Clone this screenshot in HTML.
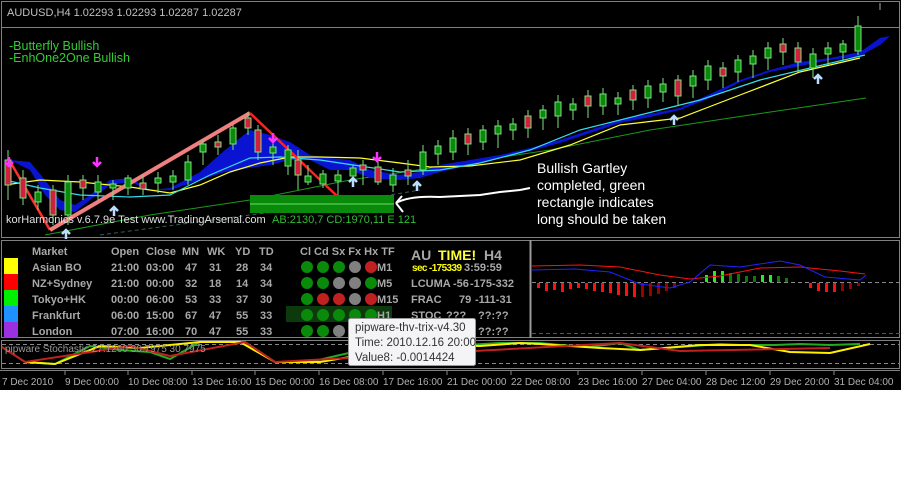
<!DOCTYPE html>
<html><head><meta charset="utf-8"><style>
body{margin:0;width:901px;height:480px;background:#fff;overflow:hidden;font-family:"Liberation Sans",sans-serif}
svg{display:block}
</style></head><body>
<svg width="901" height="480" xmlns="http://www.w3.org/2000/svg" font-family="Liberation Sans, sans-serif">
<defs>
<g id="dn"><path d="M0,-9 V0 M-4,-4 L0,0 L4,-4" stroke="#ff33ff" stroke-width="2.5" fill="none"/></g>
<g id="up"><path d="M0,9 V0 M-4,4 L0,0 L4,4" stroke="#bbddff" stroke-width="2.5" fill="none"/></g>
</defs>
<rect x="0" y="0" width="901" height="390" fill="#000"/>
<g fill="none" stroke="#808080" stroke-width="1">
<rect x="1.5" y="1.5" width="898" height="236"/>
<line x1="1" y1="27.5" x2="900" y2="27.5"/>
<rect x="1.5" y="240.5" width="898" height="97"/>
<line x1="530.5" y1="240" x2="530.5" y2="338" stroke="#999" stroke-width="2"/>
<rect x="1.5" y="340.5" width="898" height="28"/>
<line x1="0" y1="370.5" x2="900" y2="370.5"/>
</g>
<line x1="880" y1="3" x2="880" y2="10" stroke="#aaa"/>
<text x="7" y="16" fill="#c0c0c0" font-size="11">AUDUSD,H4  1.02293 1.02293 1.02287 1.02287</text>
<text x="9" y="50" fill="#33cc33" font-size="12.5">-Butterfly Bullish</text>
<text x="9" y="62" fill="#33cc33" font-size="12.5">-EnhOne2One Bullish</text>
<polyline fill="none" stroke="#1a9a1a" stroke-width="1" points="45,235 150,215 250,200 350,180 450,165 550,150 650,130 750,115 866,98"/>
<polyline fill="none" stroke="#3a5a5a" stroke-width="1" stroke-dasharray="4,3" points="100,235 250,215 330,205 420,190"/>
<path d="M10,160 L30,162 L45,180 L60,200 L75,205 L90,195 L110,180 L130,178 L150,190 L170,188 L200,172 L225,150 L250,130 L270,135 L290,142 L310,155 L330,158 L350,160 L370,170 L400,175 L420,172 L440,165 L470,160 L500,155 L530,148 L560,140 L590,130 L620,120 L650,114 L680,108 L710,94 L740,80 L770,70 L800,62 L830,58 L860,52 L880,38 L890,36 L880,45 L860,56 L830,60 L800,66 L770,72 L740,82 L710,98 L680,110 L650,117 L620,123 L590,133 L560,143 L530,151 L500,158 L470,165 L440,172 L420,178 L400,180 L370,178 L350,170 L330,170 L310,160 L290,160 L270,165 L250,168 L225,172 L200,180 L170,190 L150,190 L130,182 L110,185 L90,200 L75,212 L60,210 L45,195 L30,170 Z" fill="#0a14d0"/>
<polyline fill="none" stroke="#ffff33" stroke-width="1.2" points="5,185 40,180 80,182 130,187 170,193 200,185 230,172 260,163 290,157 320,157 360,158 400,163 430,167 470,166 520,160 570,145 620,125 680,118 740,95 800,72 860,58"/>
<polyline fill="none" stroke="#33ddee" stroke-width="1.2" points="5,180 40,188 80,195 130,197 170,195 210,175 250,158 280,157 320,160 360,166 400,172 440,170 480,163 530,150 580,130 640,115 700,100 760,80 810,68 865,55"/>
<polyline fill="none" stroke="#ff3030" stroke-width="2.5" points="8,158 50,230"/>
<polyline fill="none" stroke="#f08080" stroke-width="4" points="50,230 250,113"/>
<polyline fill="none" stroke="#ff2020" stroke-width="2.5" points="250,113 338,197"/>
<rect x="250" y="195" width="144" height="18" fill="#0a8a0a"/>
<line x1="250" y1="204" x2="394" y2="204" stroke="#66dd66"/>
<path d="M396,203 C405,198 420,196 440,197 L480,195 L500,192 L520,190 L530,188" fill="none" stroke="#fff" stroke-width="2"/>
<path d="M396,203 L402,196 M396,203 L403,212" stroke="#fff" stroke-width="2"/>
<g stroke="#7fe07f" stroke-width="1">
<line x1="8" y1="150" x2="8" y2="200"/><rect x="5" y="160" width="6" height="25" fill="#d02040"/>
<line x1="23" y1="170" x2="23" y2="205"/><rect x="20" y="178" width="6" height="20" fill="#d02040"/>
<line x1="38" y1="185" x2="38" y2="210"/><rect x="35" y="192" width="6" height="10" fill="#0a8a0a"/>
<line x1="53" y1="185" x2="53" y2="225"/><rect x="50" y="190" width="6" height="25" fill="#d02040"/>
<line x1="68" y1="175" x2="68" y2="225"/><rect x="65" y="182" width="6" height="33" fill="#0a8a0a"/>
<line x1="83" y1="175" x2="83" y2="200"/><rect x="80" y="180" width="6" height="8" fill="#d02040"/>
<line x1="98" y1="175" x2="98" y2="200"/><rect x="95" y="182" width="6" height="10" fill="#0a8a0a"/>
<line x1="113" y1="180" x2="113" y2="200"/><rect x="110" y="184" width="6" height="4" fill="#0a8a0a"/>
<line x1="128" y1="175" x2="128" y2="195"/><rect x="125" y="178" width="6" height="10" fill="#0a8a0a"/>
<line x1="143" y1="175" x2="143" y2="195"/><rect x="140" y="183" width="6" height="6" fill="#d02040"/>
<line x1="158" y1="172" x2="158" y2="193"/><rect x="155" y="178" width="6" height="5" fill="#0a8a0a"/>
<line x1="173" y1="170" x2="173" y2="190"/><rect x="170" y="176" width="6" height="6" fill="#0a8a0a"/>
<line x1="188" y1="155" x2="188" y2="185"/><rect x="185" y="162" width="6" height="18" fill="#0a8a0a"/>
<line x1="203" y1="140" x2="203" y2="165"/><rect x="200" y="144" width="6" height="8" fill="#0a8a0a"/>
<line x1="218" y1="135" x2="218" y2="155"/><rect x="215" y="142" width="6" height="5" fill="#d02040"/>
<line x1="233" y1="125" x2="233" y2="150"/><rect x="230" y="128" width="6" height="16" fill="#0a8a0a"/>
<line x1="248" y1="112" x2="248" y2="135"/><rect x="245" y="118" width="6" height="10" fill="#d02040"/>
<line x1="258" y1="125" x2="258" y2="160"/><rect x="255" y="130" width="6" height="22" fill="#d02040"/>
<line x1="273" y1="140" x2="273" y2="165"/><rect x="270" y="147" width="6" height="6" fill="#0a8a0a"/>
<line x1="288" y1="145" x2="288" y2="175"/><rect x="285" y="150" width="6" height="16" fill="#0a8a0a"/>
<line x1="298" y1="150" x2="298" y2="190"/><rect x="295" y="160" width="6" height="15" fill="#d02040"/>
<line x1="308" y1="165" x2="308" y2="185"/><rect x="305" y="176" width="6" height="6" fill="#0a8a0a"/>
<line x1="323" y1="170" x2="323" y2="188"/><rect x="320" y="174" width="6" height="10" fill="#0a8a0a"/>
<line x1="338" y1="170" x2="338" y2="195"/><rect x="335" y="175" width="6" height="6" fill="#0a8a0a"/>
<line x1="353" y1="165" x2="353" y2="185"/><rect x="350" y="168" width="6" height="8" fill="#0a8a0a"/>
<line x1="363" y1="160" x2="363" y2="185"/><rect x="360" y="165" width="6" height="5" fill="#d02040"/>
<line x1="378" y1="160" x2="378" y2="185"/><rect x="375" y="167" width="6" height="15" fill="#d02040"/>
<line x1="393" y1="168" x2="393" y2="192"/><rect x="390" y="175" width="6" height="10" fill="#0a8a0a"/>
<line x1="408" y1="160" x2="408" y2="185"/><rect x="405" y="170" width="6" height="6" fill="#d02040"/>
<line x1="423" y1="145" x2="423" y2="175"/><rect x="420" y="152" width="6" height="18" fill="#0a8a0a"/>
<line x1="438" y1="140" x2="438" y2="165"/><rect x="435" y="146" width="6" height="8" fill="#0a8a0a"/>
<line x1="453" y1="130" x2="453" y2="160"/><rect x="450" y="138" width="6" height="14" fill="#0a8a0a"/>
<line x1="468" y1="128" x2="468" y2="155"/><rect x="465" y="134" width="6" height="10" fill="#d02040"/>
<line x1="483" y1="125" x2="483" y2="150"/><rect x="480" y="130" width="6" height="12" fill="#0a8a0a"/>
<line x1="498" y1="120" x2="498" y2="148"/><rect x="495" y="126" width="6" height="8" fill="#0a8a0a"/>
<line x1="513" y1="118" x2="513" y2="140"/><rect x="510" y="124" width="6" height="6" fill="#0a8a0a"/>
<line x1="528" y1="110" x2="528" y2="138"/><rect x="525" y="116" width="6" height="12" fill="#d02040"/>
<line x1="543" y1="105" x2="543" y2="130"/><rect x="540" y="110" width="6" height="8" fill="#0a8a0a"/>
<line x1="558" y1="95" x2="558" y2="128"/><rect x="555" y="102" width="6" height="14" fill="#0a8a0a"/>
<line x1="573" y1="98" x2="573" y2="120"/><rect x="570" y="104" width="6" height="6" fill="#0a8a0a"/>
<line x1="588" y1="90" x2="588" y2="118"/><rect x="585" y="96" width="6" height="10" fill="#d02040"/>
<line x1="603" y1="88" x2="603" y2="115"/><rect x="600" y="94" width="6" height="12" fill="#0a8a0a"/>
<line x1="618" y1="92" x2="618" y2="115"/><rect x="615" y="98" width="6" height="6" fill="#0a8a0a"/>
<line x1="633" y1="85" x2="633" y2="110"/><rect x="630" y="90" width="6" height="10" fill="#d02040"/>
<line x1="648" y1="80" x2="648" y2="108"/><rect x="645" y="86" width="6" height="12" fill="#0a8a0a"/>
<line x1="663" y1="78" x2="663" y2="102"/><rect x="660" y="84" width="6" height="8" fill="#0a8a0a"/>
<line x1="678" y1="75" x2="678" y2="105"/><rect x="675" y="80" width="6" height="16" fill="#d02040"/>
<line x1="693" y1="70" x2="693" y2="98"/><rect x="690" y="76" width="6" height="10" fill="#0a8a0a"/>
<line x1="708" y1="60" x2="708" y2="90"/><rect x="705" y="66" width="6" height="14" fill="#0a8a0a"/>
<line x1="723" y1="62" x2="723" y2="88"/><rect x="720" y="68" width="6" height="8" fill="#d02040"/>
<line x1="738" y1="55" x2="738" y2="82"/><rect x="735" y="60" width="6" height="12" fill="#0a8a0a"/>
<line x1="753" y1="50" x2="753" y2="78"/><rect x="750" y="56" width="6" height="8" fill="#0a8a0a"/>
<line x1="768" y1="42" x2="768" y2="70"/><rect x="765" y="48" width="6" height="10" fill="#0a8a0a"/>
<line x1="783" y1="38" x2="783" y2="65"/><rect x="780" y="44" width="6" height="8" fill="#d02040"/>
<line x1="798" y1="42" x2="798" y2="72"/><rect x="795" y="48" width="6" height="14" fill="#d02040"/>
<line x1="813" y1="48" x2="813" y2="78"/><rect x="810" y="54" width="6" height="14" fill="#0a8a0a"/>
<line x1="828" y1="42" x2="828" y2="65"/><rect x="825" y="48" width="6" height="6" fill="#0a8a0a"/>
<line x1="843" y1="40" x2="843" y2="60"/><rect x="840" y="44" width="6" height="8" fill="#0a8a0a"/>
<line x1="858" y1="16" x2="858" y2="55"/><rect x="855" y="26" width="6" height="25" fill="#0a8a0a"/>
</g>
<use href="#dn" x="9" y="166"/><use href="#dn" x="97" y="166"/><use href="#dn" x="273" y="142"/><use href="#dn" x="377" y="161"/>
<use href="#up" x="66" y="230"/><use href="#up" x="114" y="207"/><use href="#up" x="353" y="178"/><use href="#up" x="417" y="182"/><use href="#up" x="674" y="116"/><use href="#up" x="818" y="75"/>
<text x="6" y="223" fill="#e0e0e0" font-size="11">korHarmonics v.6.7.9e Test www.TradingArsenal.com</text>
<text x="272" y="223" fill="#33bb33" font-size="11">AB:2130,7 CD:1970,11   E 121</text>
<g fill="#fff" font-size="14">
<text x="537" y="173">Bullish Gartley</text>
<text x="537" y="190">completed, green</text>
<text x="537" y="207">rectangle indicates</text>
<text x="537" y="224">long should be taken</text>
</g>
<rect x="4" y="258" width="14" height="16" fill="#ffff00"/>
<rect x="4" y="274" width="14" height="16" fill="#ff0000"/>
<rect x="4" y="290" width="14" height="16" fill="#00ee00"/>
<rect x="4" y="306" width="14" height="16" fill="#1e90ff"/>
<rect x="4" y="322" width="14" height="16" fill="#9a30e0"/>
<rect x="286" y="306" width="106" height="16" fill="#0c3a0c"/>
<g fill="#a8a8a8" font-size="11" font-weight="bold">
<text x="32" y="255">Market</text><text x="111" y="255">Open</text><text x="146" y="255">Close</text><text x="182" y="255">MN</text><text x="207" y="255">WK</text><text x="235" y="255">YD</text><text x="259" y="255">TD</text>
<text x="32" y="271">Asian BO</text><text x="111" y="271">21:00</text><text x="146" y="271">03:00</text><text x="185" y="271">47</text><text x="209" y="271">31</text><text x="236" y="271">28</text><text x="260" y="271">34</text>
<text x="32" y="287">NZ+Sydney</text><text x="111" y="287">21:00</text><text x="146" y="287">00:00</text><text x="185" y="287">32</text><text x="209" y="287">18</text><text x="236" y="287">14</text><text x="260" y="287">34</text>
<text x="32" y="303">Tokyo+HK</text><text x="111" y="303">00:00</text><text x="146" y="303">06:00</text><text x="185" y="303">53</text><text x="209" y="303">33</text><text x="236" y="303">37</text><text x="260" y="303">30</text>
<text x="32" y="319">Frankfurt</text><text x="111" y="319">06:00</text><text x="146" y="319">15:00</text><text x="185" y="319">67</text><text x="209" y="319">47</text><text x="236" y="319">55</text><text x="260" y="319">33</text>
<text x="32" y="335">London</text><text x="111" y="335">07:00</text><text x="146" y="335">16:00</text><text x="185" y="335">70</text><text x="209" y="335">47</text><text x="236" y="335">55</text><text x="260" y="335">33</text>
<text x="300" y="255">Cl  Cd  Sx  Fx  Hx  TF</text>
<text x="377" y="271">M1</text><text x="377" y="287">M5</text><text x="377" y="303">M15</text><text x="377" y="319">H1</text>
<text x="411" y="287">LCUMA</text><text x="453" y="287">-56</text><text x="470" y="287">-175-332</text>
<text x="411" y="303">FRAC</text><text x="459" y="303">79</text><text x="475" y="303">-111-31</text>
<text x="411" y="319">STOC</text><text x="446" y="319">???</text><text x="478" y="319">??:??</text>
<text x="478" y="335">??:??</text>
<text x="464" y="271">3:59:59</text>
</g>
<text x="411" y="260" fill="#a8a8a8" font-size="14" font-weight="bold">AU</text>
<text x="438" y="260" fill="#ffff33" font-size="14" font-weight="bold">TIME!</text>
<text x="484" y="260" fill="#a8a8a8" font-size="14" font-weight="bold">H4</text>
<text x="412" y="271" fill="#ffff00" font-size="10" font-weight="bold" textLength="50">sec -175339</text>
<g>
<circle cx="307" cy="267" r="6" fill="#0a8a0a"/><circle cx="323" cy="267" r="6" fill="#0a8a0a"/><circle cx="339" cy="267" r="6" fill="#0a8a0a"/><circle cx="355" cy="267" r="6" fill="#808080"/><circle cx="371" cy="267" r="6" fill="#c02020"/>
<circle cx="307" cy="283" r="6" fill="#0a8a0a"/><circle cx="323" cy="283" r="6" fill="#0a8a0a"/><circle cx="339" cy="283" r="6" fill="#808080"/><circle cx="355" cy="283" r="6" fill="#808080"/><circle cx="371" cy="283" r="6" fill="#0a8a0a"/>
<circle cx="307" cy="299" r="6" fill="#0a8a0a"/><circle cx="323" cy="299" r="6" fill="#c02020"/><circle cx="339" cy="299" r="6" fill="#c02020"/><circle cx="355" cy="299" r="6" fill="#808080"/><circle cx="371" cy="299" r="6" fill="#c02020"/>
<circle cx="307" cy="315" r="6" fill="#0a8a0a"/><circle cx="323" cy="315" r="6" fill="#0a8a0a"/><circle cx="339" cy="315" r="6" fill="#0a8a0a"/><circle cx="355" cy="315" r="6" fill="#0a8a0a"/><circle cx="371" cy="315" r="6" fill="#0a8a0a"/>
<circle cx="307" cy="331" r="6" fill="#0a8a0a"/><circle cx="323" cy="331" r="6" fill="#0a8a0a"/><circle cx="339" cy="331" r="6" fill="#808080"/><circle cx="355" cy="331" r="6" fill="#808080"/>
</g>
<line x1="532" y1="282.5" x2="900" y2="282.5" stroke="#888" stroke-dasharray="4,3"/>
<line x1="532" y1="333.5" x2="900" y2="333.5" stroke="#0a8a0a" stroke-dasharray="4,3"/>
<g fill="#ff1010">
<rect x="537" y="283" width="3" height="5"/><rect x="545" y="283" width="3" height="8"/><rect x="553" y="283" width="3" height="7"/><rect x="561" y="283" width="3" height="9"/><rect x="569" y="283" width="3" height="6"/><rect x="577" y="283" width="3" height="5"/><rect x="585" y="283" width="3" height="6"/><rect x="593" y="283" width="3" height="8"/><rect x="601" y="283" width="3" height="9"/><rect x="609" y="283" width="3" height="10"/><rect x="617" y="283" width="3" height="12"/><rect x="625" y="283" width="3" height="13"/><rect x="633" y="283" width="3" height="14"/><rect x="641" y="283" width="3" height="14" fill="#900"/><rect x="649" y="283" width="3" height="13" fill="#900"/><rect x="657" y="283" width="3" height="11" fill="#900"/><rect x="665" y="283" width="3" height="8" fill="#900"/><rect x="673" y="283" width="3" height="5" fill="#900"/>
<rect x="809" y="283" width="3" height="5"/><rect x="817" y="283" width="3" height="8"/><rect x="825" y="283" width="3" height="9"/><rect x="833" y="283" width="3" height="9"/><rect x="841" y="283" width="3" height="8" fill="#900"/><rect x="849" y="283" width="3" height="6" fill="#900"/><rect x="857" y="283" width="3" height="3" fill="#900"/>
</g>
<g fill="#22ee22">
<rect x="705" y="275" width="3" height="7"/><rect x="713" y="271" width="3" height="11"/><rect x="721" y="271" width="3" height="11"/><rect x="729" y="273" width="3" height="9" fill="#0a7a0a"/><rect x="737" y="274" width="3" height="8" fill="#0a7a0a"/><rect x="745" y="276" width="3" height="6" fill="#0a7a0a"/><rect x="753" y="276" width="3" height="6" fill="#0a7a0a"/><rect x="761" y="275" width="3" height="7"/><rect x="769" y="275" width="3" height="7"/><rect x="777" y="276" width="3" height="6" fill="#0a7a0a"/><rect x="785" y="278" width="3" height="4" fill="#0a7a0a"/>
</g>
<polyline fill="none" stroke="#ff1010" points="532,266 580,265 620,267 660,275 690,279 720,276 760,268 800,267 840,271 865,274"/>
<polyline fill="none" stroke="#2222ff" points="532,270 575,269 610,272 640,284 670,288 690,282 710,265 740,267 780,261 800,265 825,277 860,280 866,275"/>
<line x1="2" y1="344.5" x2="900" y2="344.5" stroke="#888" stroke-dasharray="4,3"/>
<line x1="2" y1="363.5" x2="900" y2="363.5" stroke="#888" stroke-dasharray="4,3"/>
<polyline fill="none" stroke="#22aa22" stroke-width="2" points="2,347 25,362 55,364 90,346 120,350 150,352 170,359 200,342 245,342 275,362 310,362 340,355 380,346 450,346 500,343 540,343 560,345 590,347 620,343 640,350 680,347 720,344 740,345 775,345 800,344 830,345 860,344"/>
<polyline fill="none" stroke="#ffee00" stroke-width="2" points="25,362 55,364 100,346 140,348 200,342 240,342 275,362 320,362 420,345 480,346 520,343 540,344 600,348 640,350 700,345 750,345 790,352 830,353 870,344"/>
<polyline fill="none" stroke="#c02020" stroke-width="2" points="2,347 25,362 130,346 170,356 245,342 275,362 620,343 680,351 830,348"/>
<text x="5" y="352" fill="#999" font-size="10">pipware Stochastic 27.1260 30.7975 30.7975</text>
<rect x="348.5" y="318.5" width="127" height="47" fill="#f4f4f6" stroke="#999" rx="2"/>
<g fill="#333" font-size="11.5"><text x="355" y="331">pipware-thv-trix-v4.30</text><text x="355" y="346">Time: 2010.12.16 20:00</text><text x="355" y="361">Value8: -0.0014424</text></g>
<g stroke="#888"><line x1="65" y1="371" x2="65" y2="375"/><line x1="128" y1="371" x2="128" y2="375"/><line x1="192" y1="371" x2="192" y2="375"/><line x1="255" y1="371" x2="255" y2="375"/><line x1="319" y1="371" x2="319" y2="375"/><line x1="383" y1="371" x2="383" y2="375"/><line x1="447" y1="371" x2="447" y2="375"/><line x1="511" y1="371" x2="511" y2="375"/><line x1="578" y1="371" x2="578" y2="375"/><line x1="642" y1="371" x2="642" y2="375"/><line x1="706" y1="371" x2="706" y2="375"/><line x1="770" y1="371" x2="770" y2="375"/><line x1="834" y1="371" x2="834" y2="375"/></g>
<g fill="#b0b0b0" font-size="10">
<text x="2" y="385">7 Dec 2010</text><text x="65" y="385">9 Dec 00:00</text><text x="128" y="385">10 Dec 08:00</text><text x="192" y="385">13 Dec 16:00</text><text x="255" y="385">15 Dec 00:00</text><text x="319" y="385">16 Dec 08:00</text><text x="383" y="385">17 Dec 16:00</text><text x="447" y="385">21 Dec 00:00</text><text x="511" y="385">22 Dec 08:00</text><text x="578" y="385">23 Dec 16:00</text><text x="642" y="385">27 Dec 04:00</text><text x="706" y="385">28 Dec 12:00</text><text x="770" y="385">29 Dec 20:00</text><text x="834" y="385">31 Dec 04:00</text>
</g>
</svg>
</body></html>
